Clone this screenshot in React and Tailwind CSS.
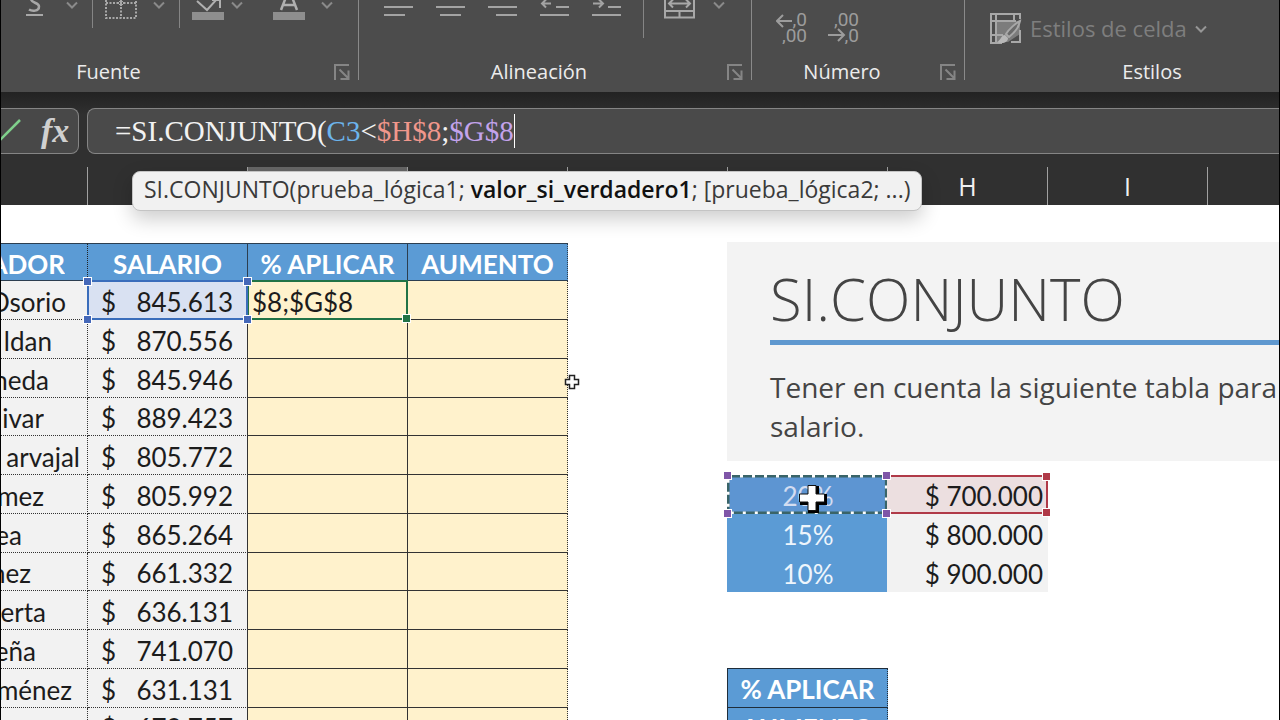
import React from 'react';

const ROWS = [
  { name: 'Osorio', end: 65, salary: '845.613', active: true },
  { name: 'ldan', end: 51, salary: '870.556' },
  { name: 'neda', end: 48, salary: '845.946' },
  { name: 'ivar', end: 43, salary: '889.423' },
  { name: 'arvajal', end: 79, salary: '805.772' },
  { name: 'mez', end: 43, salary: '805.992' },
  { name: 'ea', end: 21, salary: '865.264' },
  { name: 'nez', end: 30, salary: '661.332' },
  { name: 'erta', end: 45, salary: '636.131' },
  { name: 'eña', end: 35, salary: '741.070' },
  { name: 'ménez', end: 71, salary: '631.131' },
  { name: '', end: 0, salary: '679.757' },
];

const RATES = [
  { rate: '20%', limit: '$ 700.000', active: true },
  { rate: '15%', limit: '$ 800.000' },
  { rate: '10%', limit: '$ 900.000' },
];

const COLUMNS = [
  { id: 'C' },
  { id: 'D', selected: true },
  { id: 'E' },
  { id: 'F' },
  { id: 'G' },
  { id: 'H', label: 'H' },
  { id: 'I', label: 'I' },
];

const UI = "font-['Open_Sans','Noto_Sans',sans-serif]";

function Chevron({ className }) {
  return (
    <button aria-label="Más opciones" className={`shrink-0 text-[#8a8a8a] ${className}`}>
      <svg width="12" height="10" viewBox="0 0 12 10" fill="none" stroke="currentColor" strokeWidth="2">
        <path d="M1 2.5l5 5 5-5" />
      </svg>
    </button>
  );
}

function Lines({ label, rows, arrow }) {
  return (
    <button aria-label={label} className="shrink-0">
      <svg width="29" height="18" viewBox="0 0 29 18" fill="none" stroke="#a3a3a3" strokeWidth="2">
        {rows.map(([a, b], i) => <path key={i} d={`M${a} ${i * 8 + 7}H${b}`} />)}
        {arrow === 'left' && <path d="M11 3.5H2M6 -.5l-4 4 4 4" />}
        {arrow === 'right' && <path d="M1 3.5H11M7 -.5l4 4-4 4" />}
      </svg>
    </button>
  );
}

function Group({ title, className, innerClass = '', launcher = true, children }) {
  return (
    <div className={`flex h-20 shrink-0 flex-col ${className}`}>
      <div className="flex h-[58px] items-start">{children}</div>
      <div className={`flex h-[22px] items-end ${innerClass}`}>
        <span className="flex-1 text-center text-[20px] leading-[16px] text-[#ececec]">{title}</span>
        {launcher && (
          <button aria-label={`Configuración de ${title}`} className="ml-2 w-6 shrink-0">
            <svg width="16" height="16" viewBox="0 0 16 16" fill="none" stroke="#858585" strokeWidth="2">
              <path d="M1 16V1h14M5.500 5.500l8.500 8.500M14.500 6.500v8.500H6.500" />
            </svg>
          </button>
        )}
      </div>
    </div>
  );
}

function Ribbon() {
  return (
    <header className="flex h-[92px] shrink-0 items-start overflow-hidden bg-[#4c4c4c]">
      <Group title="Fuente" className="w-[358px] border-r border-[#8a8a8a]" innerClass="-ml-[110px]">
        <button aria-label="Subrayado" className="ml-[25px] shrink-0">
          <svg width="18" height="18" viewBox="0 0 18 18" fill="none" stroke="#a8a8a8" strokeWidth="2">
            <path d="M3 9.500c3 2 10 2 10-3C13 2.500 5 3 5-1" strokeWidth="2.500" />
            <path d="M0 15H17" />
          </svg>
        </button>
        <Chevron className="ml-[22px]" />
        <span className="ml-[14px] h-7 w-px bg-[#858585]" />
        <button aria-label="Bordes" className="ml-3 shrink-0">
          <svg width="32" height="20" viewBox="0 0 32 20" fill="none" stroke="#a8a8a8" strokeWidth="2" strokeDasharray="2 1.500">
            <path d="M1 0V18H31V0M16 0V18M1 3H31" />
            <path d="M16 0l3 3-3 3-3-3z" strokeDasharray="none" strokeWidth="1" />
          </svg>
        </button>
        <Chevron className="ml-4" />
        <span className="ml-[14px] h-7 w-px bg-[#858585]" />
        <button aria-label="Color de relleno" className="ml-3 shrink-0">
          <svg width="32" height="20" viewBox="0 0 32 20" fill="none" stroke="#b0b0b0" strokeWidth="2">
            <path d="M5 1l10 9L25-1M20 0h8v8" />
            <path d="M0 16H32" stroke="#8e8e8e" strokeWidth="8" />
          </svg>
        </button>
        <Chevron className="ml-[7px]" />
        <button aria-label="Color de fuente" className="ml-[30px] shrink-0">
          <svg width="32" height="20" viewBox="0 0 32 20" fill="none" stroke="#b0b0b0" strokeWidth="2.500">
            <path d="M8 10L13-3M24 10L19-3M10 5H22" />
            <path d="M0 16H32" stroke="#8e8e8e" strokeWidth="8" />
          </svg>
        </button>
        <Chevron className="ml-4" />
      </Group>

      <Group title="Alineación" className="w-[393px] border-r border-[#8a8a8a]">
        <div className="ml-[25px] flex gap-[23px]">
          <Lines label="Alinear a la izquierda" rows={[[0, 29], [0, 21]]} />
          <Lines label="Centrar" rows={[[0, 29], [4, 25]]} />
          <Lines label="Alinear a la derecha" rows={[[0, 29], [8, 29]]} />
          <Lines label="Disminuir sangría" rows={[[16, 29], [0, 29]]} arrow="left" />
          <Lines label="Aumentar sangría" rows={[[16, 29], [0, 29]]} arrow="right" />
        </div>
        <span className="ml-[22px] h-[38px] w-px bg-[#858585]" />
        <button aria-label="Combinar y centrar" className="ml-5 shrink-0">
          <svg width="31" height="19" viewBox="0 0 31 19" fill="none" stroke="#a8a8a8" strokeWidth="2">
            <path d="M1 0V17.500H30V0M1 11H30M15.500 11V17.500M5 3.500H26M9 -.5l-4 4 4 4M22 -.5l4 4-4 4" />
          </svg>
        </button>
        <Chevron className="ml-[18px]" />
      </Group>

      <Group title="Número" className="w-[213px] border-r border-[#8a8a8a]">
        <button aria-label="Aumentar decimales" className="ml-6 mt-[11px] shrink-0">
          <svg width="32" height="33" viewBox="0 0 32 33" fill="none" stroke="#9c9c9c" strokeWidth="2">
            <path d="M16 10H1M7 4L1 10l6 6" />
            <g fill="#9c9c9c" stroke="none" fontFamily="Roboto" fontSize="19" textAnchor="end">
              <text x="31" y="15">,0</text>
              <text x="31" y="31">,00</text>
            </g>
          </svg>
        </button>
        <button aria-label="Disminuir decimales" className="ml-5 mt-[11px] shrink-0">
          <svg width="32" height="33" viewBox="0 0 32 33" fill="none" stroke="#9c9c9c" strokeWidth="2">
            <path d="M0 24H16M10 18l6 6-6 6" />
            <g fill="#9c9c9c" stroke="none" fontFamily="Roboto" fontSize="19" textAnchor="end">
              <text x="31" y="15">,00</text>
              <text x="31" y="31">,0</text>
            </g>
          </svg>
        </button>
      </Group>

      <Group title="Estilos" className="w-[374px]" launcher={false}>
        <button className="ml-6 mt-3 flex items-center gap-2 text-[22px] leading-[33px] font-medium whitespace-nowrap text-[#7e7e7e]">
          <svg width="33" height="33" viewBox="0 0 33 33" fill="none" stroke="#a8a8a8" strokeWidth="2">
            <path d="M7 9h24v13L19 30H7z" fill="#7c7c7c" stroke="none" />
            <path d="M13 31H2V2H31V7M31 18V30H22M7 2V31M2 9H27M2 23H14M25 2V8" />
            <path d="M31 9c-4 2-11 8-14 13l3 3c5-4 10-10 11-16z" fill="#6a6a6a" />
            <path d="M16 23c-4 0-4 5-8 7 5 2 11 1 11-4z" fill="#b8b8b8" stroke="none" />
          </svg>
          Estilos de celda
          <svg width="12" height="10" viewBox="0 0 12 10" fill="none" stroke="#969696" strokeWidth="2">
            <path d="M1 2.500l5 5 5-5" />
          </svg>
        </button>
      </Group>
    </header>
  );
}

function FormulaBar() {
  return (
    <div className="flex h-[46px] shrink-0 gap-2">
      <div className="flex w-[78px] items-center rounded-r-lg border border-l-0 border-[#858585] bg-[#484848]">
        <button aria-label="Introducir" className="h-full w-[20px]">
          <svg width="20" height="44" viewBox="0 0 20 44" fill="none" stroke="#7fd08c" strokeWidth="2.500">
            <path d="M-1 31L19 11" />
          </svg>
        </button>
        <button aria-label="Insertar función" className="ml-5 font-['Liberation_Serif',serif] text-[34px] leading-[40px] font-bold text-[#d0d0d0] italic">
          fx
        </button>
      </div>
      <div className="relative flex flex-1 items-center rounded-l-lg border border-r-0 border-[#858585] bg-[#4a4a4a] pl-[27px] font-['Liberation_Serif',serif] text-[29px] leading-[36px] text-[#f2f2f2]">
        <div aria-hidden="true" className="flex items-center whitespace-pre">
          <span>=SI.CONJUNTO(</span>
          <span className="text-[#6cb4ec]">C3</span>
          <span>&lt;</span>
          <span className="text-[#f0978c]">$H$8</span>
          <span>;</span>
          <span className="text-[#c3a3ec]">$G$8</span>
          <span className="h-[34px] w-px bg-white" />
        </div>
        <input
          aria-label="Barra de fórmulas"
          defaultValue="=SI.CONJUNTO(C3<$H$8;$G$8"
          className="absolute inset-0 bg-transparent pl-[27px] text-transparent outline-none"
        />
      </div>
    </div>
  );
}

function Tooltip() {
  return (
    <div className="absolute top-[79px] left-[131px] rounded-lg border border-[#c4c4c4] bg-[#f1f1f1] px-[11px] pb-1 text-[23px] leading-[34px] whitespace-nowrap text-[#3a3a3a] shadow-[0_8px_20px_rgba(0,0,0,0.2)]">
      SI.CONJUNTO(prueba_lógica1; <b className="font-semibold text-[#111]">valor_si_verdadero1</b>; [prueba_lógica2; ...)
    </div>
  );
}

function ColumnHeaders() {
  return (
    <div className="mt-[13px] flex h-[38px] shrink-0 overflow-hidden text-[25px] leading-[38px] font-medium text-[#f0f0f0]">
      <div className="w-[87px] shrink-0 border-r border-[#a0a0a0]" />
      {COLUMNS.map(col => (
        <div
          key={col.id}
          className={`w-40 shrink-0 border-r border-[#a0a0a0] text-center ${col.selected ? 'bg-[#666]' : ''}`}
        >
          {col.label}
        </div>
      ))}
    </div>
  );
}

function Handle({ className }) {
  return <span className={`absolute z-10 size-[9px] border border-white ${className}`} />;
}

function SalaryTable() {
  const head = 'border-r border-b border-t border-[#2c3e50] bg-[#5b9bd5] p-0 pt-[3px] font-bold text-white text-center';
  return (
    <table className="mt-px w-[567px] shrink-0 table-fixed border-separate border-spacing-0 self-start">
      <colgroup>
        <col className="w-[87px]" />
        <col className="w-40" />
        <col className="w-40" />
        <col className="w-40" />
      </colgroup>
      <thead>
        <tr className="h-[38px]">
          <th className="overflow-hidden border-t border-r border-b border-t-[#2c3e50] border-r-[#222] border-b-[#2c3e50] bg-[#5b9bd5] p-0 pt-[3px] [border-right-style:dotted]">
            <div className="flex w-16 justify-end overflow-hidden text-white">ADOR</div>
          </th>
          <th className={head}>SALARIO</th>
          <th className={head}>% APLICAR</th>
          <th className={`${head} [border-right-style:dotted]`}>AUMENTO</th>
        </tr>
      </thead>
      <tbody className="[&>tr]:h-[39px] [&>tr:nth-child(4n)]:h-[38px]">
        {ROWS.map(row => (
          <tr key={row.salary}>
            <td className="border-r border-b border-dotted border-[#333] bg-[#f2f2f2] p-0 pt-[3px]">
              <div className="flex justify-end overflow-hidden whitespace-nowrap" style={{ width: row.end }}>{row.name}</div>
            </td>
            <td className={`relative border-r border-b border-r-[#333] border-b-[#333] p-0 pt-[3px] [border-bottom-style:dotted] ${row.active ? 'bg-[#d9e1f2]' : 'bg-[#f2f2f2]'}`}>
              <div className="flex justify-between pr-[14px] pl-[13px]"><span>$</span><span>{row.salary}</span></div>
              {row.active && (
                <div className="absolute -inset-px z-10 border-2 border-[#3a6dbb]">
                  <Handle className="-top-[5px] -left-[6px] bg-[#4568b8]" />
                  <Handle className="-top-[5px] -right-[6px] bg-[#4568b8]" />
                  <Handle className="-bottom-[6px] -left-[6px] bg-[#4568b8]" />
                  <Handle className="-right-[6px] -bottom-[6px] bg-[#4568b8]" />
                </div>
              )}
            </td>
            <td className="relative border-r border-b border-[#333] bg-[#fff2cc] p-0 pt-[3px] pl-[4px]">
              {row.active && '$8;$G$8'}
              {row.active && (
                <div className="absolute -inset-px border-2 border-[#217346]">
                  <Handle className="-right-[5px] -bottom-[5px] bg-[#217346]" />
                </div>
              )}
            </td>
            <td className="border-r border-b border-r-[#333] border-b-[#333] bg-[#fff2cc] p-0 [border-right-style:dotted]" />
          </tr>
        ))}
      </tbody>
    </table>
  );
}

function RateTable() {
  return (
    <table className="mt-[14px] w-[321px] table-fixed border-separate border-spacing-0">
      <tbody className="[&>tr]:h-[39px]">
        {RATES.map(row => (
          <tr key={row.rate}>
            <td className="relative w-40 bg-[#5b9bd5] p-0 pt-[2px] pl-[2px] text-center text-[#eef5fc]">
              {row.rate}
              {row.active && (
                <div className="absolute inset-0 bg-[#6a7fc8]/20">
                  <svg className="absolute inset-0 size-full" fill="none">
                    <rect x="1" y="1" width="99%" height="37" stroke="#3a6468" strokeWidth="3" />
                    <rect x="1" y="1" width="99%" height="37" stroke="#fff" strokeWidth="3" strokeDasharray="3 9" />
                  </svg>
                  <Handle className="-top-1 -left-1 bg-[#7f56a8]" />
                  <Handle className="-top-1 -right-1 bg-[#7f56a8]" />
                  <Handle className="-bottom-1 -left-1 bg-[#7f56a8]" />
                  <Handle className="-right-1 -bottom-1 bg-[#7f56a8]" />
                  {/* mouse pointer */}
                  <svg className="absolute top-[9px] left-[71px]" width="30" height="30" viewBox="0 0 30 30">
                    <path d="M11 3h9v8h8v9h-8v8h-9v-8H3v-9h8z" fill="#000" stroke="#000" strokeWidth="2" />
                    <path d="M10 1.500h8v8.500h8.500v8H18v8.500h-8V18H1.500v-8H10z" fill="#fff" stroke="#111" />
                  </svg>
                </div>
              )}
            </td>
            <td className={`relative p-0 pt-[2px] pr-[5px] text-right ${row.active ? 'bg-[#ecdfe0]' : 'bg-[#f2f2f2]'}`}>
              {row.limit}
              {row.active && (
                <div className="absolute inset-0 border-2 border-l-0 border-[#b03a48]">
                  <Handle className="-top-[5px] -right-[5px] bg-[#b03a48]" />
                  <Handle className="-right-[5px] -bottom-[5px] bg-[#b03a48]" />
                </div>
              )}
            </td>
          </tr>
        ))}
      </tbody>
    </table>
  );
}

function SummaryTable() {
  return (
    <table className="mt-[76px] w-[161px] border-separate border-spacing-0 border-t border-l border-[#1f2d3a] text-center font-bold text-white">
      <tbody className="[&>tr]:h-[39px]">
        {['% APLICAR', 'AUMENTO'].map(label => (
          <tr key={label}>
            <th className="border-r border-b border-[#1f2d3a] bg-[#5b9bd5] p-0 pt-px [border-right-style:dotted]">{label}</th>
          </tr>
        ))}
      </tbody>
    </table>
  );
}

export default function App() {
  return (
    <div className={`flex h-screen flex-col overflow-hidden border-x border-black bg-white ${UI}`}>
      <Ribbon />
      <div className="relative z-20 flex shrink-0 flex-col bg-[#2d2d2d] bg-linear-to-b from-[#222] to-[#303030] to-20% pt-4">
        <FormulaBar />
        <ColumnHeaders />
        <Tooltip />
      </div>

      <main className="relative flex min-h-0 flex-1 overflow-hidden pt-[37px] font-['Lato',sans-serif] text-[26px] leading-[32px] text-[#1c1c1c]">
        <SalaryTable />
        {/* second pointer, resting on the table edge */}
        <svg className="absolute top-[169px] left-[563px]" width="16" height="16" viewBox="0 0 16 16">
          <path d="M5.500 1.500h5v4h4v5h-4v4h-5v-4h-4v-5h4z" fill="#fff" stroke="#222" strokeWidth="1.500" />
        </svg>
        <div className="ml-[159px] flex min-w-0 flex-1 flex-col">
          <section className={`h-[219px] shrink-0 bg-[#f3f3f3] pt-6 pl-[43px] text-[#444] ${UI}`}>
            <h1 className="text-[58px] leading-[66px] font-light">SI.CONJUNTO</h1>
            <div className="mt-2 h-[5px] bg-[#5f98cf]" />
            <p className="mt-[23px] text-[28px] leading-[39px]">
              <span className="whitespace-nowrap">Tener en cuenta la siguiente tabla para</span> salario.
            </p>
          </section>
          <RateTable />
          <SummaryTable />
        </div>
      </main>
    </div>
  );
}
